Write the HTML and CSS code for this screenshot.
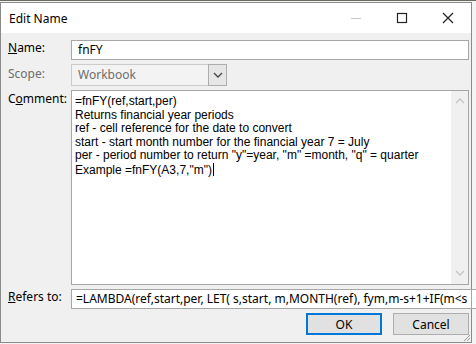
FILE: index.html
```html
<!DOCTYPE html>
<html>
<head>
<meta charset="utf-8">
<link rel="stylesheet" href="styles.css">
</head>
<body>
<div class="backdrop">
  <div class="dialog">
    <div class="titlebar">
      <span class="title">Edit Name</span>
      <div class="controls">
        <span class="ctl"><svg width="12" height="12" viewBox="0 0 12 12"><line x1="1" y1="6.5" x2="11" y2="6.5" stroke="#c8c8c8" stroke-width="1"/></svg></span>
        <span class="ctl"><svg width="12" height="12" viewBox="0 0 12 12"><rect x="1.5" y="1.5" width="9" height="9" fill="none" stroke="#222" stroke-width="1.2"/></svg></span>
        <span class="ctl"><svg width="12" height="12" viewBox="0 0 12 12"><path d="M1 1 L11 11 M11 1 L1 11" stroke="#222" stroke-width="1.2"/></svg></span>
      </div>
    </div>
    <div class="body">
      <div class="row">
        <label class="lbl"><u>N</u>ame:</label>
        <div class="field name">fnFY</div>
      </div>
      <div class="row">
        <label class="lbl dim">Scope:</label>
        <div class="select">
          <span class="seltext">Workbook</span>
          <span class="selbtn"><svg width="10" height="6" viewBox="0 0 10 6"><path d="M1 1 L5 5 L9 1" fill="none" stroke="#444" stroke-width="1.3"/></svg></span>
        </div>
      </div>
      <div class="row">
        <label class="lbl lbl-c">C<u>o</u>mment:</label>
        <div class="textarea">
          <div class="ta-text">
            <div>=fnFY(ref,start,per)</div>
            <div>Returns financial year periods</div>
            <div>ref - cell reference for the date to convert</div>
            <div>start - start month number for the financial year 7 = July</div>
            <div>per - period number to return "y"=year, "m" =month, "q" = quarter</div>
            <div>Example =fnFY(A3,7,"m")<span class="caret"></span></div>
          </div>
          <div class="scroll">
            <svg width="10" height="6" viewBox="0 0 10 6"><path d="M1 5 L5 1 L9 5" fill="none" stroke="#c4c4c4" stroke-width="1.3"/></svg>
            <svg width="10" height="6" viewBox="0 0 10 6"><path d="M1 1 L5 5 L9 1" fill="none" stroke="#c4c4c4" stroke-width="1.3"/></svg>
          </div>
        </div>
      </div>
      <div class="row">
        <label class="lbl"><u>R</u>efers to:</label>
        <div class="refers">
          <div class="reftext">=LAMBDA(ref,start,per, LET( s,start, m,MONTH(ref), fym,m-s+1+IF(m&lt;s</div>
          <span class="refbtn"><svg width="12" height="12" viewBox="0 0 12 12"><path d="M6 2 L10 6.5 L7 6.5 L7 9 L5 9 L5 6.5 L2 6.5 Z" fill="#111"/><rect x="2" y="10" width="8" height="1.3" fill="#111"/></svg></span>
        </div>
      </div>
      <div class="buttons">
        <button class="btn ok">OK</button>
        <button class="btn">Cancel</button>
      </div>
      <svg class="grip" width="10" height="10" viewBox="0 0 10 10"><path d="M9 3 L3 9 M9 6 L6 9" stroke="#9a9a9a" stroke-width="1"/></svg>
    </div>
  </div>
</div>
</body>
</html>
```

FILE: styles.css
```css
html, body {
  margin: 0;
  padding: 0;
}
body {
  width: 476px;
  height: 344px;
  background: #ffffff;
  overflow: hidden;
  font-family: "Noto Sans", "Open Sans", sans-serif;
  font-size: 12px;
  color: #000;
}
.backdrop {
  height: 344px;
  background: #f4f4f4;
  border-top: 1px solid #6a6a5a;
  box-sizing: border-box;
}
.dialog {
  width: 472px;
  height: 341px;
  margin-top: 1px;
  border: 1px solid #8a8a8a;
  box-sizing: border-box;
  background: #f0f0f0;
  display: flex;
  flex-direction: column;
}
.titlebar {
  height: 30px;
  background: #ffffff;
  display: flex;
  align-items: center;
  justify-content: space-between;
  padding-left: 8px;
}
.title {
  font-size: 12px;
  color: #000;
}
.controls {
  display: flex;
  height: 30px;
}
.ctl {
  width: 46px;
  display: flex;
  align-items: center;
  justify-content: center;
}
.body {
  flex: 1;
  padding: 7px 2px 0 7px;
  display: flex;
  flex-direction: column;
  gap: 4px;
  position: relative;
}
.row {
  display: flex;
  align-items: flex-start;
}
.lbl {
  width: 63px;
  flex: none;
  padding-top: 0px;
  line-height: 16px;
  color: #000;
}
.lbl-c {
  padding-top: 1px;
}
.lbl.dim {
  color: #6d6d6d;
  padding-top: 2px;
}
.field {
  flex: 1;
  height: 20px;
  box-sizing: border-box;
  border: 1px solid #a6a6a6;
  background: #fff;
  padding: 1px 6px;
  line-height: 16px;
}
.select {
  width: 156px;
  height: 22px;
  box-sizing: border-box;
  border: 1px solid #cccccc;
  background: #f3f3f3;
  display: flex;
  color: #6d6d6d;
}
.seltext {
  flex: 1;
  padding: 2px 6px;
  line-height: 16px;
}
.selbtn {
  width: 17px;
  border: 1px solid #adadad;
  margin: -1px -1px -1px 0;
  background: #e6e6e6;
  display: flex;
  align-items: center;
  justify-content: center;
}
.textarea {
  flex: 1;
  height: 195px;
  box-sizing: border-box;
  border: 1px solid #a6a6a6;
  background: #fff;
  display: flex;
}
.ta-text {
  flex: 1;
  padding: 4px 3px;
  font-family: "Liberation Sans", Arial, sans-serif;
  font-size: 12px;
  line-height: 13.5px;
  white-space: nowrap;
  overflow: hidden;
}
.caret {
  display: inline-block;
  width: 1px;
  height: 13px;
  background: #000;
  vertical-align: -2px;
  margin-left: 1px;
}
.scroll {
  width: 17px;
  background: #f0f0f0;
  display: flex;
  flex-direction: column;
  justify-content: space-between;
  align-items: center;
  padding: 7px 0 8px;
}
.refers {
  flex: 1;
  height: 20px;
  display: flex;
}
.reftext {
  flex: 1;
  box-sizing: border-box;
  border: 1px solid #a6a6a6;
  background: #fff;
  padding: 1px 4px;
  line-height: 16px;
  white-space: nowrap;
  overflow: hidden;
}
.refbtn {
  width: 20px;
  box-sizing: border-box;
  border: 1px solid #a6a6a6;
  border-left: none;
  background: #fff;
  display: flex;
  align-items: center;
  justify-content: center;
}
.buttons {
  display: flex;
  justify-content: flex-end;
  gap: 11px;
}
.btn {
  width: 76px;
  height: 22px;
  box-sizing: border-box;
  border: 1px solid #adadad;
  background: #e1e1e1;
  font-family: "Noto Sans", "Open Sans", sans-serif;
  font-size: 12px;
  color: #000;
  padding: 0;
}
.btn.ok {
  border: 2px solid #0078d7;
}
.grip {
  position: absolute;
  right: 0;
  bottom: 0;
}
```
